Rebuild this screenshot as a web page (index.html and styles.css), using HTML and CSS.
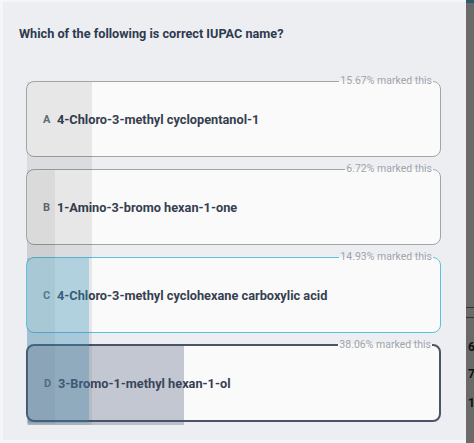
FILE: index.html
```html
<!DOCTYPE html>
<html lang="en">
<head>
<meta charset="utf-8">
<link rel="stylesheet" href="styles.css">
</head>
<body>
<div class="page">
  <main class="panel">
    <h1 class="question">Which of the following is correct IUPAC name?</h1>
    <div class="options">
      <fieldset class="opt">
        <legend>15.67% marked this</legend>
        <div class="row">
          <span class="bar bar-a" style="width:15.67%;height:343px"></span>
          <span class="key">A</span>
          <span class="ans">4-Chloro-3-methyl cyclopentanol-1</span>
        </div>
      </fieldset>
      <fieldset class="opt">
        <legend>6.72% marked this</legend>
        <div class="row">
          <span class="bar bar-b" style="width:6.72%;height:254px"></span>
          <span class="key">B</span>
          <span class="ans">1-Amino-3-bromo hexan-1-one</span>
        </div>
      </fieldset>
      <fieldset class="opt opt-picked">
        <legend>14.93% marked this</legend>
        <div class="row">
          <span class="bar bar-c" style="width:14.93%;height:165px"></span>
          <span class="key">C</span>
          <span class="ans">4-Chloro-3-methyl cyclohexane carboxylic acid</span>
        </div>
      </fieldset>
      <fieldset class="opt opt-correct">
        <legend>38.06% marked this</legend>
        <div class="row">
          <span class="bar bar-d" style="width:38.06%;height:79px"></span>
          <span class="key">D</span>
          <span class="ans">3-Bromo-1-methyl hexan-1-ol</span>
        </div>
      </fieldset>
    </div>
  </main>
  <aside class="side">
    <div class="side-top"></div>
    <div class="side-rest">
      <span class="side-line"></span>
      <span class="side-line"></span>
      <span class="side-num n6">6</span>
      <span class="side-num n7">7</span>
      <span class="side-num n1">1</span>
    </div>
  </aside>
</div>
</body>
</html>
```

FILE: styles.css
```css
* { box-sizing: border-box; }
html, body { margin: 0; padding: 0; }
body {
  background: #f5f6f8;
  font-family: Roboto, "Liberation Sans", Arial, sans-serif;
  width: 474px;
  height: 443px;
  overflow: hidden;
}
.page {
  display: flex;
  height: 443px;
}
.panel {
  width: 463px;
  height: 438px;
  margin: 2px 0 0 3px;
  background: #eceef2;
  padding: 24px 25px 0 23px;
}
.question {
  margin: 0 0 33px -7px;
  font-size: 12.7px;
  line-height: 16px;
  font-weight: 700;
  color: #2e3a4e;
}
.options {
  display: flex;
  flex-direction: column;
  gap: 6px;
}
.opt {
  margin: 0;
  padding: 0 0 4px;
  min-width: 0;
  border: 1.5px solid #a4a4a6;
  border-radius: 8px;
  background: #fafafa;
}
.opt legend {
  margin-left: auto;
  margin-right: 7px;
  padding: 0 1px;
  font-size: 10.5px;
  line-height: 12px;
  color: #a0a4ab;
  font-weight: 400;
}
.opt-picked { border-color: #5cc0df; }
.opt-correct { border: 2px solid #4a5466; }
.row {
  position: relative;
  height: 65px;
  display: flex;
  align-items: center;
  padding-left: 16px;
  gap: 6px;
}
.bar {
  position: absolute;
  left: 0;
  top: -5px;
  z-index: 1;
}
.bar-a { background: rgba(0, 0, 0, 0.075); }
.bar-b { background: rgba(0, 0, 0, 0.055); }
.bar-c { background: rgba(70, 165, 205, 0.33); }
.bar-d { background: rgba(70, 82, 115, 0.3); }
.key {
  font-size: 11px;
  font-weight: 700;
  color: #6b7280;
  width: 8px;
}
.ans {
  font-size: 12.75px;
  font-weight: 700;
  color: #363f50;
}
.side {
  width: 8px;
  height: 443px;
  display: flex;
  flex-direction: column;
  background: #6a6a6a;
}
.side-top {
  height: 3px;
  background: #2c5c6a;
}
.side-rest {
  position: relative;
  flex: 1;
}
.side-line {
  position: absolute;
  left: 0;
  right: 0;
  height: 1px;
  background: #333;
  top: 304px;
}
.side-line + .side-line { top: 314px; }
.side-num {
  position: absolute;
  left: 2px;
  font-size: 12px;
  font-weight: 700;
  color: #111;
  line-height: 12px;
}
.n6 { top: 338px; }
.n7 { top: 365px; }
.n1 { top: 394px; }
```
